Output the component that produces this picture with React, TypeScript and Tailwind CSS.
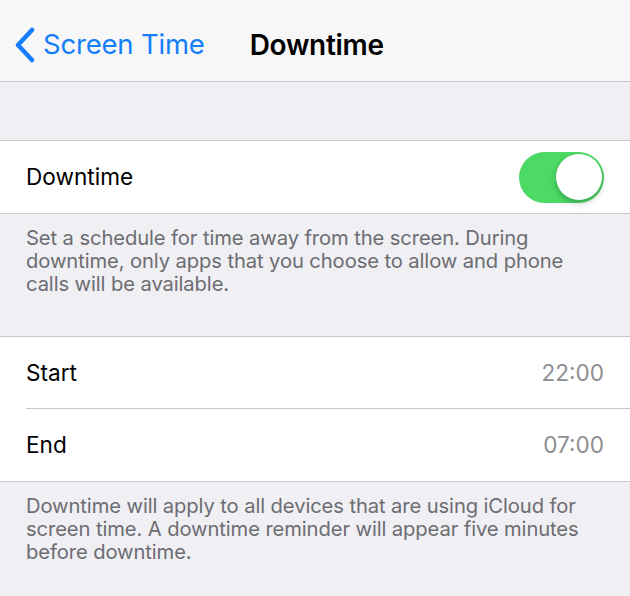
const font = { fontFamily: 'Inter, "Noto Sans", sans-serif' }

function Toggle({ on }: { on: boolean }) {
  return (
    <div
      className={`flex h-[51px] w-[85px] items-center rounded-full p-[2.5px] ${
        on ? 'justify-end bg-[#4cd964]' : 'justify-start bg-[#e5e5ea]'
      }`}
    >
      <div className="h-[46px] w-[46px] rounded-full bg-white shadow-[0_3px_6px_rgba(0,0,0,0.25)]" />
    </div>
  )
}

function Footer({ children }: { children: React.ReactNode }) {
  return (
    <p className="px-[26px] pt-[12px] text-[20.2px] leading-[23px] tracking-[-0.1px] text-[#6d6d72]">
      {children}
    </p>
  )
}

export default function App() {
  return (
    <div className="h-[596px] w-[630px] overflow-hidden bg-[#efeff4]" style={font}>
      <header className="flex h-[82px] items-center border-b border-[#c8c7cc] bg-[#f7f7f8] pt-[8px]">
        <div className="flex items-center text-[#147efb]">
          <svg width="24" height="36" viewBox="0 0 24 36" className="ml-[13px]">
            <path
              d="M19 3 L5 18 L19 33"
              fill="none"
              stroke="currentColor"
              strokeWidth="4.5"
              strokeLinecap="round"
              strokeLinejoin="round"
            />
          </svg>
          <span className="ml-[6px] text-[27.5px] tracking-[-0.2px]">Screen Time</span>
        </div>
        <h1 className="ml-[45px] text-[28px] font-semibold tracking-[-0.3px] text-black">Downtime</h1>
      </header>

      <div className="h-[58px]" />

      <section className="border-y border-[#c8c7cc] bg-white">
        <div className="flex h-[72px] items-center justify-between pl-[26px] pr-[26px]">
          <span className="text-[22.6px] text-black">Downtime</span>
          <Toggle on />
        </div>
      </section>

      <Footer>
        Set a schedule for time away from the screen. During downtime, only apps that you choose to
        allow and phone calls will be available.
      </Footer>

      <div className="h-[41px]" />

      <section className="border-y border-[#c8c7cc] bg-white">
        {[
          ['Start', '22:00'],
          ['End', '07:00'],
        ].map(([label, time], i) => (
          <div key={label} className="pl-[26px]">
            <div
              className={`flex h-[72px] items-center justify-between pr-[26px] ${
                i === 0 ? 'border-b border-[#c8c7cc]' : ''
              }`}
            >
              <span className="text-[22.6px] text-black">{label}</span>
              <span className="text-[22.6px] text-[#8e8e93]">{time}</span>
            </div>
          </div>
        ))}
      </section>

      <Footer>
        Downtime will apply to all devices that are using iCloud for screen time. A downtime reminder
        will appear five minutes before downtime.
      </Footer>
    </div>
  )
}
